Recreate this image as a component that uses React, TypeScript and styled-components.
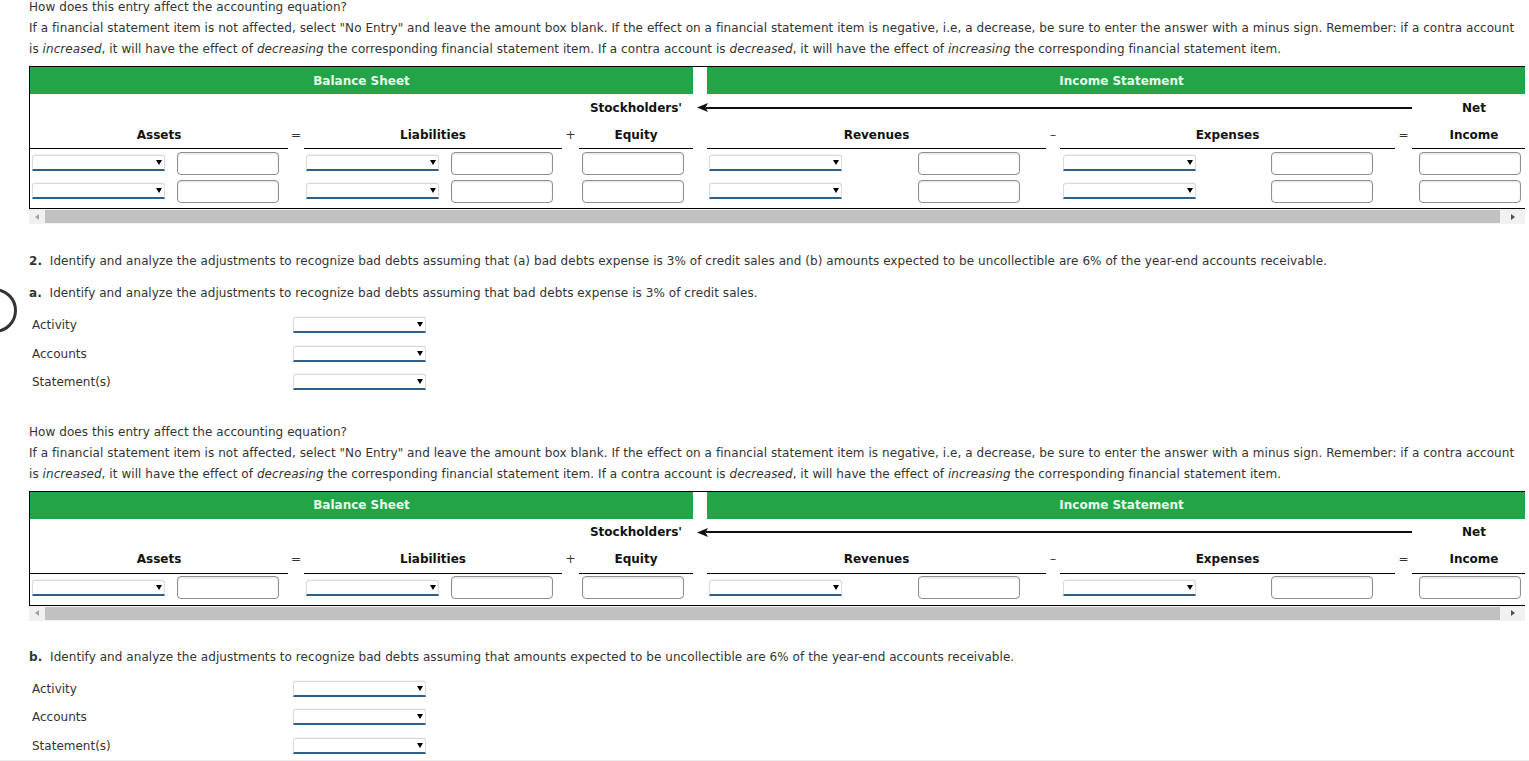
import React from 'react'
import styled, { createGlobalStyle } from 'styled-components'

const GlobalStyle = createGlobalStyle`
  body {
    margin: 0;
    background: #fff;
    font-family: "DejaVu Sans", Verdana, sans-serif;
    font-size: 12px;
    color: #333;
  }
`

const Page = styled.div`
  position: relative;
  margin-top: -3px;
  padding: 0 4px 0 29px;
`

const Prompt = styled.p<{ $gap?: number }>`
  margin: ${p => p.$gap ?? 0}px 0 0;
  line-height: 21px;
  letter-spacing: 0.06px;
  white-space: nowrap;
`

const Question = styled.p<{ $gap: number }>`
  margin: ${p => p.$gap}px 0 0;
  line-height: 21px;
  letter-spacing: 0.06px;
  b {
    color: #333;
  }
`

const Frame = styled.div`
  margin-top: 6px;
  border: 1px solid #000;
  border-right: none;
  overflow: hidden;
`

const COLS =
  '141px 117px 16px 141px 117px 17px 114px 14px 205px 134px 14px 205px 130px 17px 124px'

const Sheet = styled.div`
  display: grid;
  grid-template-columns: ${COLS};
  width: max-content;
  padding-bottom: 3px;
`

const Band = styled.div<{ $span: number }>`
  grid-column: span ${p => p.$span};
  height: 27px;
  background: #22a447;
  color: #eaf8ec;
  font-weight: bold;
  display: flex;
  align-items: center;
  justify-content: center;
`

const Blank = styled.div<{ $span?: number }>`
  grid-column: span ${p => p.$span ?? 1};
`

const HeadText = styled.div`
  height: 27px;
  display: flex;
  align-items: center;
  justify-content: center;
  font-weight: bold;
  color: #111;
`

const Caption = styled.div<{ $span?: number; $rule?: boolean }>`
  grid-column: span ${p => p.$span ?? 1};
  height: 27px;
  display: flex;
  align-items: center;
  justify-content: center;
  font-weight: ${p => (p.$rule ? 'bold' : 'normal')};
  color: ${p => (p.$rule ? '#111' : '#333')};
  border-bottom: 1px solid ${p => (p.$rule ? '#000' : 'transparent')};
`

const ArrowCell = styled.div`
  grid-column: span 7;
  display: flex;
  align-items: center;
  padding-left: 4px;
`

const ArrowLine = styled.div`
  flex: 1;
  height: 2px;
  margin-left: -2px;
  background: #111;
`

const Cell = styled.div<{ $pad: number }>`
  height: 28px;
  display: flex;
  align-items: center;
  padding-left: ${p => p.$pad}px;
`

const DropWrap = styled.span`
  position: relative;
  display: inline-block;
  width: 133px;
  height: 16px;
  &::after {
    content: '';
    position: absolute;
    right: 3px;
    top: 5px;
    border-left: 3.5px solid transparent;
    border-right: 3.5px solid transparent;
    border-top: 5px solid #000;
    pointer-events: none;
  }
`

const Drop = styled.select`
  appearance: none;
  display: block;
  width: 100%;
  height: 100%;
  margin: 0;
  padding: 0;
  box-sizing: border-box;
  background: #fff;
  border: 1px solid #dadada;
  border-bottom: 2px solid #2e5f86;
  border-radius: 3px 3px 0 0;
  box-shadow: 0 -1px 1px rgba(0, 0, 0, 0.05);
  outline: none;
`

const Amount = styled.input`
  width: 102px;
  height: 23px;
  margin: 0;
  box-sizing: border-box;
  border: 1px solid #8f8f8f;
  border-radius: 4px;
  box-shadow: inset 0 1px 2px rgba(0, 0, 0, 0.12);
  background: #fff;
  outline: none;
`

const Scrollbar = styled.div`
  display: flex;
  align-items: center;
  height: 15px;
  background: #f1f1f1;
`

const Step = styled.div<{ $w: number }>`
  width: ${p => p.$w}px;
  height: 15px;
  display: flex;
  align-items: center;
  justify-content: center;
`

const Thumb = styled.div`
  flex: 1;
  height: 13px;
  background: #c1c1c1;
`

const Tri = styled.span<{ $dir: 'left' | 'right'; $color: string }>`
  width: 0;
  height: 0;
  border-top: 3.5px solid transparent;
  border-bottom: 3.5px solid transparent;
  ${p =>
    p.$dir === 'left'
      ? `border-right: 4px solid ${p.$color};`
      : `border-left: 4px solid ${p.$color};`}
`

const Fields = styled.div`
  margin-top: 7px;
`

const FieldRow = styled.div`
  display: grid;
  grid-template-columns: 261px 133px;
  align-items: center;
  height: 28.5px;
  padding-left: 3px;
`

const Ring = styled.div`
  position: absolute;
  left: -28px;
  top: 291px;
  width: 45px;
  height: 45px;
  box-sizing: border-box;
  border: 3px solid #333;
  border-radius: 50%;
`

const Footer = styled.div`
  margin: 0 -4px 0 -29px;
  border-top: 2px solid #ececec;
  height: 4px;
`

const Select = () => (
  <DropWrap>
    <Drop defaultValue="">
      <option value="" />
    </Drop>
  </DropWrap>
)

const DataRow = () => (
  <>
    <Cell $pad={2}><Select /></Cell>
    <Cell $pad={6}><Amount /></Cell>
    <Blank />
    <Cell $pad={2}><Select /></Cell>
    <Cell $pad={6}><Amount /></Cell>
    <Blank />
    <Cell $pad={3}><Amount /></Cell>
    <Blank />
    <Cell $pad={2}><Select /></Cell>
    <Cell $pad={6}><Amount /></Cell>
    <Blank />
    <Cell $pad={3}><Select /></Cell>
    <Cell $pad={6}><Amount /></Cell>
    <Blank />
    <Cell $pad={7}><Amount /></Cell>
  </>
)

const EffectTable = ({ rows }: { rows: number }) => (
  <>
    <Frame>
      <Sheet>
        <Band $span={7}>Balance Sheet</Band>
        <Blank />
        <Band $span={7}>Income Statement</Band>

        <Blank $span={6} />
        <HeadText>Stockholders'</HeadText>
        <ArrowCell>
          <svg width="11" height="9" viewBox="0 0 11 9">
            <polygon points="0,4.5 11,0 8.5,4.5 11,9" fill="#111" />
          </svg>
          <ArrowLine />
        </ArrowCell>
        <HeadText>Net</HeadText>

        <Caption $span={2} $rule>Assets</Caption>
        <Caption>=</Caption>
        <Caption $span={2} $rule>Liabilities</Caption>
        <Caption>+</Caption>
        <Caption $rule>Equity</Caption>
        <Caption />
        <Caption $span={2} $rule>Revenues</Caption>
        <Caption>–</Caption>
        <Caption $span={2} $rule>Expenses</Caption>
        <Caption>=</Caption>
        <Caption $rule>Income</Caption>

        {Array.from({ length: rows }).map((_, i) => (
          <DataRow key={i} />
        ))}
      </Sheet>
    </Frame>
    <Scrollbar>
      <Step $w={16}><Tri $dir="left" $color="#a3a3a3" /></Step>
      <Thumb />
      <Step $w={25}><Tri $dir="right" $color="#505050" /></Step>
    </Scrollbar>
  </>
)

const Instructions = ({ gap }: { gap?: number }) => (
  <>
    <Prompt $gap={gap}>How does this entry affect the accounting equation?</Prompt>
    <Prompt>
      If a financial statement item is not affected, select "No Entry" and leave the amount box
      blank. If the effect on a financial statement item is negative, i.e, a decrease, be sure to
      enter the answer with a minus sign. Remember: if a contra account
      <br />
      is <i>increased</i>, it will have the effect of <i>decreasing</i> the corresponding financial
      statement item. If a contra account is <i>decreased</i>, it will have the effect of{' '}
      <i>increasing</i> the corresponding financial statement item.
    </Prompt>
  </>
)

const Analysis = () => (
  <Fields>
    <FieldRow>
      <span>Activity</span>
      <Select />
    </FieldRow>
    <FieldRow>
      <span>Accounts</span>
      <Select />
    </FieldRow>
    <FieldRow>
      <span>Statement(s)</span>
      <Select />
    </FieldRow>
  </Fields>
)

export default function App() {
  return (
    <>
      <GlobalStyle />
      <Page>
        <Ring />
        <Instructions />
        <EffectTable rows={2} />

        <Question $gap={27}>
          <b>2.</b>&nbsp; Identify and analyze the adjustments to recognize bad debts assuming that
          (a) bad debts expense is 3% of credit sales and (b) amounts expected to be uncollectible
          are 6% of the year-end accounts receivable.
        </Question>
        <Question $gap={11}>
          <b>a.</b>&nbsp; Identify and analyze the adjustments to recognize bad debts assuming that
          bad debts expense is 3% of credit sales.
        </Question>
        <Analysis />

        <Instructions gap={25} />
        <EffectTable rows={1} />

        <Question $gap={26}>
          <b>b.</b>&nbsp; Identify and analyze the adjustments to recognize bad debts assuming that
          amounts expected to be uncollectible are 6% of the year-end accounts receivable.
        </Question>
        <Analysis />
        <Footer />
      </Page>
    </>
  )
}
